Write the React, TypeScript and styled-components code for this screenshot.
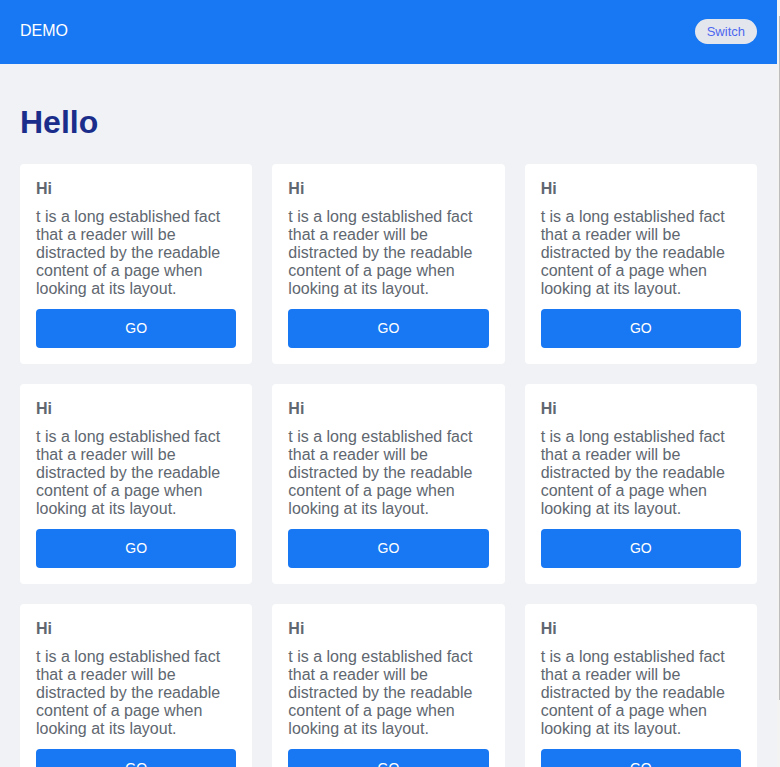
import * as React from 'react'
import styled, { createGlobalStyle } from 'styled-components'

const GlobalStyle = createGlobalStyle`
  html, body {
    margin: 0;
    padding: 0;
    background: #f0f2f5;
    font-family: 'Liberation Sans', Arial, sans-serif;
    overflow: hidden;
  }

  * {
    box-sizing: border-box;
  }
`

const Frame = styled.div`
  display: flex;
  height: 100vh;
`

const Page = styled.div`
  flex: 1;
  min-width: 0;
  overflow-y: auto;
  background: #f0f2f5;
`

// thin scrollbar strip at the right edge
const ScrollTrack = styled.div`
  width: 3px;
  flex: none;
  background: #f3f3f3;
  padding: 16px 0 0 2px;
`

const ScrollThumb = styled.div`
  width: 1px;
  height: 684px;
  background: #bdbdbd;
`

const Header = styled.header`
  height: 64px;
  padding: 0 20px;
  display: flex;
  align-items: center;
  justify-content: space-between;
  background: #1877f2;
`

const Brand = styled.div`
  color: #ffffff;
  font-size: 16px;
  margin-top: -2px;
`

const SwitchButton = styled.button`
  height: 25px;
  padding: 0 12px;
  border: none;
  border-radius: 13px;
  background: #e4e6ee;
  color: #4d68ee;
  font-family: inherit;
  font-size: 13px;
  cursor: pointer;
  margin-top: -2px;
`

const Main = styled.main`
  padding: 40px 20px 40px;
`

const Heading = styled.h1`
  margin: 0 0 23px;
  font-size: 32px;
  font-weight: 700;
  color: #1b2d8b;
`

const Grid = styled.div`
  display: grid;
  grid-template-columns: repeat(3, 1fr);
  gap: 20px;
`

const Card = styled.div`
  height: 200px;
  padding: 16px;
  background: #ffffff;
  border-radius: 4px;
  display: flex;
  flex-direction: column;
`

const CardTitle = styled.div`
  font-size: 16px;
  line-height: 18px;
  font-weight: 700;
  color: #606770;
  margin-bottom: 10px;
`

const CardText = styled.p`
  margin: 0 0 11px;
  font-size: 16px;
  line-height: 18px;
  color: #606770;
`

const GoButton = styled.button`
  height: 39px;
  width: 100%;
  padding: 0 0 2px;
  border: none;
  border-radius: 4px;
  background: #1877f2;
  color: #ffffff;
  font-family: inherit;
  font-size: 14px;
  cursor: pointer;
`

const cards = Array.from({ length: 9 }, (_, i) => i)

export default function App() {
  return (
    <>
      <GlobalStyle />
      <Frame>
        <Page>
          <Header>
            <Brand>DEMO</Brand>
            <SwitchButton>Switch</SwitchButton>
          </Header>
          <Main>
            <Heading>Hello</Heading>
            <Grid>
              {cards.map((index) => (
                <Card key={index}>
                  <CardTitle>Hi</CardTitle>
                  <CardText>
                    t is a long established fact that a reader will be
                    distracted by the readable content of a page when looking
                    at its layout.
                  </CardText>
                  <GoButton>GO</GoButton>
                </Card>
              ))}
            </Grid>
          </Main>
        </Page>
        <ScrollTrack>
          <ScrollThumb />
        </ScrollTrack>
      </Frame>
    </>
  )
}
